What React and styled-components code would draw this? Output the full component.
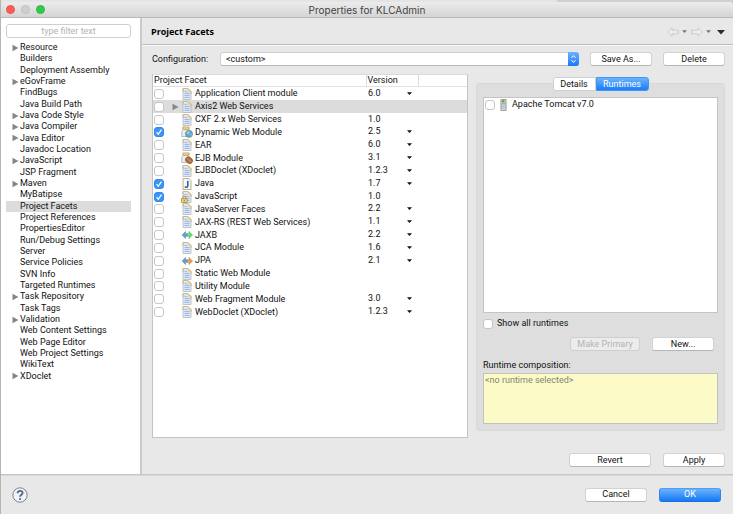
import React, { useState } from 'react';
import styled, { createGlobalStyle, css } from 'styled-components';

const GlobalStyle = createGlobalStyle`
  *, *::before, *::after { box-sizing: border-box; }
  body { margin: 0; background: #a9a9a9; }
  body, button, input, select, textarea {
    font-family: Roboto, "Liberation Sans", sans-serif;
    font-size: 9px;
    line-height: 11px;
    color: #111;
  }
  button { border: 0; padding: 0; background: none; }
  svg { display: block; flex: none; }
`;

const Desktop = styled.div`
  min-height: 100vh;
  display: flex;
  flex-direction: column;
  padding: 2px 0 0 1px;
  background: linear-gradient(90deg, #b5b5b5 0 1px, #e4e4e4 1px 76%, #d0d0d0 76%);
`;

const Window = styled.div`
  flex: 1;
  display: flex;
  flex-direction: column;
  border-radius: 4px 4px 0 4px;
  overflow: hidden;
  background: #e8e8e8;
`;

const TitleBar = styled.header`
  display: grid;
  grid-template-columns: 1fr auto 1fr;
  align-items: center;
  height: 16px;
  padding: 0 5px;
  border-bottom: 1px solid #b9b9b9;
  background: linear-gradient(#ececec, #d4d4d4);
`;

const Title = styled.h1`
  margin: 0;
  font-family: Inter, "Liberation Sans", sans-serif;
  font-size: 10px;
  font-weight: 400;
  line-height: 14px;
  color: #444;
`;

const Lights = styled.div`
  display: flex;
  gap: 6px;
`;

const Light = styled.button`
  width: 9px;
  height: 9px;
  border-radius: 50%;
  background: ${(p) => p.$fill};
  border: 1px solid ${(p) => p.$edge};
`;

const Body = styled.div`
  flex: 1;
  display: flex;
`;

const Sidebar = styled.nav`
  flex: none;
  width: 141px;
  padding: 6px 9px 0 5px;
  background: #fff;
  border-right: 2px solid #cbcbcb;
`;

const Filter = styled.input`
  display: block;
  width: 100%;
  height: 14px;
  padding: 0;
  border: 1px solid #cfcfcf;
  border-radius: 3px;
  text-align: center;
  outline: none;
  &::placeholder { color: #b4b4b4; opacity: 1; }
`;

const Tree = styled.ul`
  display: grid;
  grid-auto-rows: 1fr;
  height: 340px;
  margin: 4px 0 0;
  padding: 0;
  list-style: none;
`;

const TreeRow = styled.li`
  display: grid;
  grid-template-columns: 14px 1fr;
  align-items: center;
  background: ${(p) => (p.$selected ? '#dcdcdc' : 'none')};
`;

const TreeLabel = styled.button`
  grid-column: 2;
  text-align: left;
  white-space: nowrap;
`;

const Expander = styled.button`
  display: flex;
  padding-left: ${(p) => p.$indent || 0}px;
`;

const Main = styled.main`
  flex: 1;
  min-width: 0;
  display: flex;
  flex-direction: column;
`;

const PageHeader = styled.div`
  display: flex;
  align-items: center;
  justify-content: space-between;
  height: 28px;
  padding: 0 8px 0 9px;
  border-bottom: 1px solid #f8f8f8;
  box-shadow: inset 0 -1px #bdbdbd;
`;

const PageTitle = styled.h2`
  margin: 0;
  font-family: "Open Sans", "Noto Sans", sans-serif;
  font-size: 9px;
  font-weight: 700;
  line-height: 12px;
  color: #000;
`;

const History = styled.div`
  display: flex;
  align-items: center;
`;

const HistoryButton = styled.button`
  display: flex;
  align-items: center;
  gap: 3px;
  margin-left: ${(p) => p.$gap || 0}px;
`;

const Content = styled.div`
  flex: 1;
  display: flex;
  flex-direction: column;
  padding: 6px 8px 7px 10px;
`;

const ConfigRow = styled.div`
  display: flex;
  align-items: center;
  gap: 11px;
`;

const ConfigLabel = styled.label`
  flex: none;
  width: 57px;
`;

const SelectWrap = styled.div`
  position: relative;
  flex: 1;
  height: 14px;
`;

const Select = styled.select`
  appearance: none;
  display: block;
  width: 100%;
  height: 14px;
  padding: 0 14px 0 5px;
  border: 1px solid #cfcfcf;
  border-bottom-color: #b8b8b8;
  border-radius: 3px;
  background: #fff;
`;

const Stepper = styled.span`
  position: absolute;
  top: 0;
  right: 0;
  width: 11px;
  height: 14px;
  display: flex;
  align-items: center;
  justify-content: center;
  border-radius: 0 3px 3px 0;
  background: linear-gradient(#6db3fa, #1a78f7);
  pointer-events: none;
`;

const PushButton = styled.button`
  flex: none;
  width: ${(p) => p.$width || 62}px;
  height: 14px;
  border: 1px solid #d2d2d2;
  border-bottom-color: #b6b6b6;
  border-radius: 3px;
  background: #fff;
  &:disabled {
    color: #b3b3b3;
    background: #ececec;
    border-color: #cfcfcf;
  }
  ${(p) => p.$primary && css`
    color: #fff;
    border-color: #4d9ff5 #2f86ee #1a6fe0;
    background: linear-gradient(#6db3fa, #1478f8);
  `}
`;

const Columns = styled.div`
  flex: 1;
  display: grid;
  grid-template-columns: 316fr 249fr;
  gap: 8px;
  margin: 8px 0 15px;
`;

const FacetBox = styled.div`
  background: #fff;
  border: 1px solid #c4c4c4;
  border-top-color: #dcdcdc;
`;

const FacetTable = styled.table`
  width: 100%;
  height: 243px;
  table-layout: fixed;
  border-collapse: collapse;
`;

const HeadCell = styled.th`
  width: ${(p) => (p.$width ? `${p.$width}px` : 'auto')};
  padding: 0 1px;
  text-align: left;
  font-weight: 400;
  border-bottom: 1px solid #e2e2e2;
  border-right: ${(p) => (p.$width ? '1px solid #dcdcdc' : '0')};
`;

const FacetRow = styled.tr`
  background: ${(p) => (p.$selected ? '#dcdcdc' : 'none')};
`;

const Cell = styled.td`
  padding: 0 1px;
`;

const FacetName = styled.div`
  display: grid;
  grid-template-columns: 10px 17px 12px 1fr;
  align-items: center;
  height: 11px;
  white-space: nowrap;
`;

const FacetLabel = styled.label`
  padding-left: 2px;
`;

const Version = styled.div`
  display: flex;
  align-items: center;
  justify-content: space-between;
  padding: 0 5px 0 1px;
`;

const Check = styled.input`
  appearance: none;
  flex: none;
  width: 10px;
  height: 10px;
  margin: 0;
  border: 1px solid #c6c6c6;
  border-radius: 3px;
  background: #fff;
  &:checked {
    border-color: #2f8af5;
    background: #3b94f8 url("data:image/svg+xml,%3Csvg xmlns='http://www.w3.org/2000/svg' viewBox='0 0 8 8'%3E%3Cpath d='M1.5 4.2 3.3 6.2 6.5 1.6' fill='none' stroke='white' stroke-width='1.2'/%3E%3C/svg%3E");
  }
`;

const Panel = styled.section`
  display: flex;
  flex-direction: column;
  margin: 9px 0 7px;
  padding: 0 6px 6px;
  border: 1px solid #d8d8d8;
  border-radius: 3px;
  background: #dedede;
`;

const Tabs = styled.div`
  display: flex;
  align-self: center;
  margin: -7px 0 6px;
`;

const Tab = styled.button`
  width: ${(p) => p.$width}px;
  height: 14px;
  border: 1px solid #d0d0d0;
  border-radius: 3px 0 0 3px;
  background: #fff;
  ${(p) => p.$active && css`
    color: #fff;
    border-color: #3f97f6;
    border-radius: 0 3px 3px 0;
    background: linear-gradient(#6db3fa, #1a7cf8);
  `}
`;

const RuntimeList = styled.div`
  flex: 1;
  padding: 1px;
  background: #fff;
  border: 1px solid #c4c4c4;
`;

const CheckLine = styled.label`
  display: flex;
  align-items: center;
  gap: ${(p) => p.$gap}px;
  height: 11px;
  margin: ${(p) => (p.$spaced ? '5px 0 8px' : '0')};
`;

const Actions = styled.div`
  display: flex;
  justify-content: flex-end;
  gap: 12px;
  padding-right: ${(p) => p.$inset || 0}px;
`;

const CompositionLabel = styled.label`
  margin: 9px 0 2px;
`;

const Composition = styled.textarea`
  display: block;
  width: 100%;
  height: 51px;
  padding: 1px;
  border: 1px solid #c2c2c2;
  background: #fcfbc8;
  color: #84846e;
  resize: none;
  outline: none;
`;

const Footer = styled.footer`
  display: flex;
  align-items: center;
  justify-content: space-between;
  height: 40px;
  padding: 0 12px 0 11px;
  border-top: 1px solid #c6c6c6;
  box-shadow: inset 0 1px #d8d8d8;
`;

const Disclosure = () => (
  <svg width="7" height="8" viewBox="0 0 7 8" aria-hidden="true">
    <path d="M.5.8 6.5 4 .5 7.2z" fill="#868686" />
  </svg>
);

const Caret = ({ fill = '#333', size = 5 }) => (
  <svg width={size} height={size} viewBox="0 0 4 4" aria-hidden="true">
    <path d="M0 1h4L2 3.2z" fill={fill} />
  </svg>
);

const HistoryArrow = ({ flip }) => (
  <svg width="12" height="10" viewBox="0 0 12 10" aria-hidden="true">
    <path
      d={flip ? 'M11.4 5 7 .8v2.4H.6v3.6H7v2.4z' : 'M.6 5 5 .8v2.4h6.4v3.6H5v2.4z'}
      fill="#eee"
      stroke="#cacaca"
      strokeLinejoin="round"
    />
  </svg>
);

const DocShape = () => (
  <g>
    <path d="M2 .5h5L10 3.5v8H2z" fill="#dfeaf7" stroke="#b3b9bd" strokeWidth=".8" />
    <path d="M2 4V.5h5l3 3V6" fill="none" stroke="#cdb878" strokeWidth=".9" />
    <path d="M6.8.8v3H10z" fill="#e8cb84" />
    <path d="M3.5 3.4h2.4M3.5 5.4h5M3.5 7.4h5M3.5 9.4h5" stroke="#93addb" strokeWidth=".9" />
  </g>
);

const JarShape = () => (
  <g>
    <path d="M2.5 3.2.8 5.2v5.3h7.7V5L7.2 3.2z" fill="#e6eef6" stroke="#a9aeb6" strokeWidth=".8" />
    <path d="M1.9 1h6.2v2.2H1.9z" fill="#f8e2ac" stroke="#c79c44" strokeWidth=".9" />
  </g>
);

const FacetIcon = ({ kind }) => (
  <svg width="12" height="12" viewBox="0 0 12 12" aria-hidden="true">
    {(kind === 'doc' || kind === 'locked') && <DocShape />}
    {kind === 'locked' && (
      <g>
        <path d="M1.7 8V6.6a1.5 1.5 0 0 1 3 0V8" fill="none" stroke="#b18d35" />
        <path d="M.4 7.7h5.7v3.9H.4z" fill="#f3d888" stroke="#ad882e" strokeWidth=".8" />
        <path d="M3.2 8.9v1.5" stroke="#856524" />
      </g>
    )}
    {kind === 'web' && (
      <g>
        <JarShape />
        <circle cx="8" cy="7.8" r="3.6" fill="#64a5cc" stroke="#5688b5" strokeWidth=".6" />
        <path d="M5.3 7.2 7.3 4.8l1.7 1.4-1.5 2.2zM8.6 9.8l1.9-2.3.6 1.2z" fill="#a6d5ac" />
      </g>
    )}
    {kind === 'ejb' && (
      <g>
        <JarShape />
        <ellipse cx="8" cy="8.2" rx="3.8" ry="3" transform="rotate(35 8 8.2)" fill="#ae6c48" stroke="#864e30" strokeWidth=".6" />
        <path d="M5.5 6.4c2 .2 1.9 1.6 2.5 2.1s1.7.4 2.4 1.5" fill="none" stroke="#e0b292" strokeWidth=".7" />
      </g>
    )}
    {kind === 'java' && (
      <g>
        <path d="M2 .5h6L10 2.7v8.8H2z" fill="#f4f8fd" stroke="#b9a76e" strokeWidth=".9" />
        <path d="M6.8 2.8v5c0 1.6-1.9 1.8-2.9.9" fill="none" stroke="#2f669f" strokeWidth="1.6" />
      </g>
    )}
    {(kind === 'jaxb' || kind === 'jpa') && (
      <g>
        <path d="M4.6 2.4v2.3h1.6v2.6H4.6v2.3L1 6z" fill="#6d9dc8" stroke="#4a7dab" strokeWidth=".5" />
        <path
          d="M8 2.4v2.3H6.4v2.6H8v2.3L11.6 6z"
          fill={kind === 'jaxb' ? '#6bdc78' : '#dea160'}
          stroke={kind === 'jaxb' ? '#3fb355' : '#bb7a38'}
          strokeWidth=".5"
        />
      </g>
    )}
  </svg>
);

const ServerIcon = () => (
  <svg width="7" height="12" viewBox="0 0 7 12" aria-hidden="true">
    <path d="M.9.5h5.2v11H.9z" fill="#d7dde8" stroke="#899078" strokeWidth=".8" />
    <path d="M1.4 1h4.2v4.1H1.4z" fill="#abc3a0" />
    <path d="M2.2 2.2h1.6" stroke="#178b2c" strokeWidth="1.2" />
    <path d="M1.3 5h4.4M1.3 7h4.4M1.3 9h4.4" stroke="#8b98ae" strokeWidth=".6" />
  </svg>
);

const HelpIcon = () => (
  <svg width="16" height="16" viewBox="0 0 16 16" aria-hidden="true">
    <circle cx="8" cy="8" r="7.2" fill="#f1f3f7" stroke="#77839d" />
    <path d="M5.6 6.2c0-3.1 5-3.1 5-.3 0 1.8-2.5 1.8-2.5 3.8" fill="none" stroke="#56678b" strokeWidth="1.9" />
    <circle cx="8.1" cy="12" r="1.1" fill="#56678b" />
  </svg>
);

const pages = [
  ['Resource', true], ['Builders'], ['Deployment Assembly'], ['eGovFrame', true], ['FindBugs'],
  ['Java Build Path'], ['Java Code Style', true], ['Java Compiler', true], ['Java Editor', true],
  ['Javadoc Location'], ['JavaScript', true], ['JSP Fragment'], ['Maven', true], ['MyBatipse'],
  ['Project Facets'], ['Project References'], ['PropertiesEditor'], ['Run/Debug Settings'],
  ['Server'], ['Service Policies'], ['SVN Info'], ['Targeted Runtimes'], ['Task Repository', true],
  ['Task Tags'], ['Validation', true], ['Web Content Settings'], ['Web Page Editor'],
  ['Web Project Settings'], ['WikiText'], ['XDoclet', true],
];

const facets = [
  { name: 'Application Client module', version: '6.0', menu: true },
  { name: 'Axis2 Web Services', parent: true, selected: true },
  { name: 'CXF 2.x Web Services', version: '1.0' },
  { name: 'Dynamic Web Module', version: '2.5', menu: true, on: true, icon: 'web' },
  { name: 'EAR', version: '6.0', menu: true },
  { name: 'EJB Module', version: '3.1', menu: true, icon: 'ejb' },
  { name: 'EJBDoclet (XDoclet)', version: '1.2.3', menu: true },
  { name: 'Java', version: '1.7', menu: true, on: true, icon: 'java' },
  { name: 'JavaScript', version: '1.0', on: true, icon: 'locked' },
  { name: 'JavaServer Faces', version: '2.2', menu: true },
  { name: 'JAX-RS (REST Web Services)', version: '1.1', menu: true },
  { name: 'JAXB', version: '2.2', menu: true, icon: 'jaxb' },
  { name: 'JCA Module', version: '1.6', menu: true },
  { name: 'JPA', version: '2.1', menu: true, icon: 'jpa' },
  { name: 'Static Web Module' },
  { name: 'Utility Module' },
  { name: 'Web Fragment Module', version: '3.0', menu: true },
  { name: 'WebDoclet (XDoclet)', version: '1.2.3', menu: true },
];

function PropertyTree() {
  const [current, setCurrent] = useState('Project Facets');
  return (
    <Sidebar aria-label="Property pages">
      <Filter type="text" placeholder="type filter text" aria-label="Filter" />
      <Tree>
        {pages.map(([name, parent]) => (
          <TreeRow key={name} $selected={name === current}>
            {parent && <Expander $indent={6} aria-label={`Expand ${name}`}><Disclosure /></Expander>}
            <TreeLabel onClick={() => setCurrent(name)}>{name}</TreeLabel>
          </TreeRow>
        ))}
      </Tree>
    </Sidebar>
  );
}

function FacetList() {
  return (
    <FacetBox>
      <FacetTable>
        <thead>
          <tr>
            <HeadCell $width={213}>Project Facet</HeadCell>
            <HeadCell $width={52}>Version</HeadCell>
            <HeadCell aria-hidden="true" />
          </tr>
        </thead>
        <tbody>
          {facets.map((f, i) => (
            <FacetRow key={f.name} $selected={f.selected}>
              <Cell>
                <FacetName>
                  <Check type="checkbox" id={`facet-${i}`} defaultChecked={f.on} />
                  {f.parent ? <Expander $indent={8} aria-label={`Expand ${f.name}`}><Disclosure /></Expander> : <span />}
                  <FacetIcon kind={f.icon || 'doc'} />
                  <FacetLabel htmlFor={`facet-${i}`}>{f.name}</FacetLabel>
                </FacetName>
              </Cell>
              <Cell>
                <Version>
                  {f.version}
                  {f.menu && <button aria-label={`Change ${f.name} version`}><Caret fill="#111" /></button>}
                </Version>
              </Cell>
              <Cell />
            </FacetRow>
          ))}
        </tbody>
      </FacetTable>
    </FacetBox>
  );
}

function RuntimePanel() {
  return (
    <Panel>
      <Tabs role="tablist">
        <Tab role="tab" aria-selected="false" $width={43}>Details</Tab>
        <Tab role="tab" aria-selected="true" $width={53} $active>Runtimes</Tab>
      </Tabs>
      <RuntimeList>
        <CheckLine $gap={5}>
          <Check type="checkbox" />
          <ServerIcon />
          Apache Tomcat v7.0
        </CheckLine>
      </RuntimeList>
      <CheckLine $gap={4} $spaced>
        <Check type="checkbox" />
        Show all runtimes
      </CheckLine>
      <Actions $inset={4}>
        <PushButton $width={70} disabled>Make Primary</PushButton>
        <PushButton>New...</PushButton>
      </Actions>
      <CompositionLabel htmlFor="composition">Runtime composition:</CompositionLabel>
      <Composition id="composition" readOnly value="<no runtime selected>" />
    </Panel>
  );
}

export default function App() {
  return (
    <Desktop>
      <GlobalStyle />
      <Window>
        <TitleBar>
          <Lights>
            <Light $fill="#fc5b57" $edge="#ee514b" aria-label="Close" />
            <Light $fill="#cfcfcf" $edge="#bfbfbf" aria-label="Minimize" />
            <Light $fill="#34c84a" $edge="#2cb942" aria-label="Zoom" />
          </Lights>
          <Title>Properties for KLCAdmin</Title>
        </TitleBar>
        <Body>
          <PropertyTree />
          <Main>
            <PageHeader>
              <PageTitle>Project Facets</PageTitle>
              <History>
                <HistoryButton aria-label="Back"><HistoryArrow /><Caret fill="#777" /></HistoryButton>
                <HistoryButton $gap={4} aria-label="Forward"><HistoryArrow flip /><Caret fill="#777" /></HistoryButton>
                <HistoryButton $gap={6} aria-label="Menu"><Caret fill="#30233f" size={8} /></HistoryButton>
              </History>
            </PageHeader>
            <Content>
              <ConfigRow>
                <ConfigLabel htmlFor="configuration">Configuration:</ConfigLabel>
                <SelectWrap>
                  <Select id="configuration"><option>&lt;custom&gt;</option></Select>
                  <Stepper>
                    <svg width="7" height="10" viewBox="0 0 7 10" aria-hidden="true">
                      <path d="M1.5 3.8 3.5 1.6l2 2.2M1.5 6.2l2 2.2 2-2.2" fill="none" stroke="#fff" />
                    </svg>
                  </Stepper>
                </SelectWrap>
                <PushButton>Save As...</PushButton>
                <PushButton>Delete</PushButton>
              </ConfigRow>
              <Columns>
                <FacetList />
                <RuntimePanel />
              </Columns>
              <Actions>
                <PushButton $width={82}>Revert</PushButton>
                <PushButton>Apply</PushButton>
              </Actions>
            </Content>
          </Main>
        </Body>
        <Footer>
          <button aria-label="Help"><HelpIcon /></button>
          <Actions>
            <PushButton>Cancel</PushButton>
            <PushButton $primary>OK</PushButton>
          </Actions>
        </Footer>
      </Window>
    </Desktop>
  );
}
